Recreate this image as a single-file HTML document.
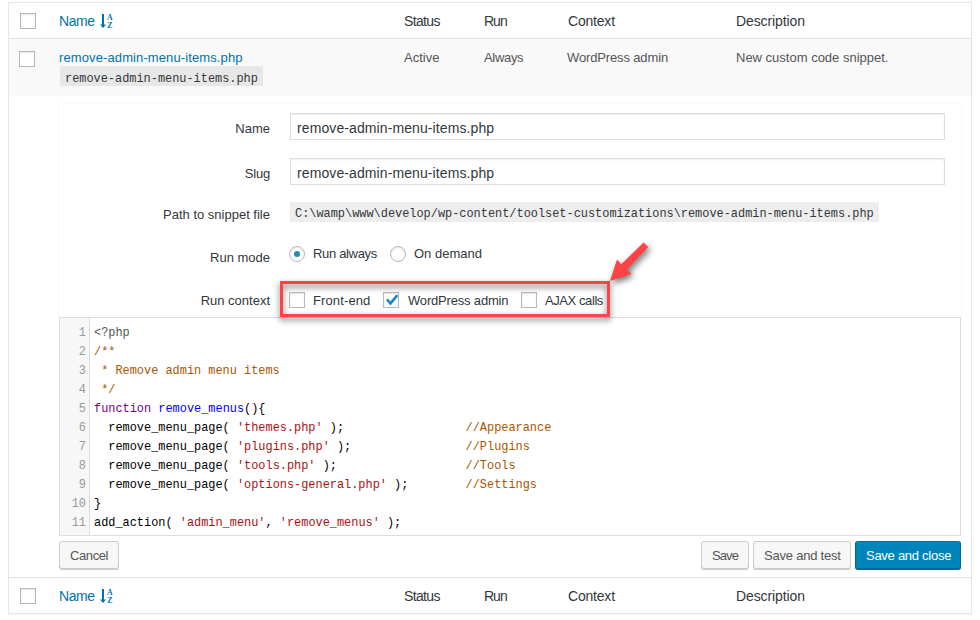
<!DOCTYPE html>
<html><head><meta charset="utf-8">
<style>
*{box-sizing:border-box;margin:0;padding:0}
html,body{width:980px;height:620px;overflow:hidden;background:#fff}
body{position:relative;font-family:"Liberation Sans",sans-serif;font-size:13px;color:#555}
.a{position:absolute;white-space:pre;line-height:16px}
.tbl{position:absolute;left:8px;top:2px;width:964px;height:612px;border:1px solid #e5e5e5;box-shadow:0 1px 1px rgba(0,0,0,.04);background:#fff}
.hl{position:absolute;left:9px;width:962px;height:1px;background:#e1e1e1}
.cb{position:absolute;width:16px;height:16px;border:1px solid #b4b9be;background:#fff;box-shadow:inset 0 1px 2px rgba(0,0,0,.1)}
.th{color:#32373c}
.lnk{color:#0073aa}
.code{position:absolute;font-family:"Liberation Mono",monospace;font-size:11.92px;color:#32373c;background:rgba(0,0,0,.07);white-space:pre}
.lbl{color:#32373c;text-align:right}
.inp{position:absolute;left:290px;width:655px;height:27px;border:1px solid #ddd;box-shadow:inset 0 1px 2px rgba(0,0,0,.07);background:#fff}
.radio{position:absolute;width:16px;height:16px;border:1px solid #b4b9be;border-radius:50%;background:#fff;box-shadow:inset 0 1px 2px rgba(0,0,0,.1)}
.btn{position:absolute;top:541px;height:28px;border:1px solid #ccc;border-radius:3px;background:#f7f7f7;box-shadow:0 1px 0 #ccc;color:#555}
.pri{background:#0085ba;border-color:#0073aa #006799 #006799;box-shadow:0 1px 0 #006799;color:#fff}
.ed{position:absolute;left:59px;top:317px;width:902px;height:219px;border:1px solid #ddd;background:#fff;overflow:hidden}
.gut{position:absolute;left:0;top:0;width:30px;height:100%;background:#f7f7f7;border-right:1px solid #ddd}
.ln{position:absolute;left:0;width:26px;text-align:right;font-family:"Liberation Mono",monospace;font-size:11.92px;color:#999;line-height:19px}
.cl{position:absolute;left:34px;font-family:"Liberation Mono",monospace;font-size:11.92px;color:#000;line-height:19px;white-space:pre}
.k{color:#708}.d{color:#00f}.s{color:#a11}.c{color:#a50}
</style></head><body>
<div class="tbl"></div>
<!-- header -->
<div class="hl" style="top:38px"></div>
<div class="cb" style="left:20px;top:13px"></div>
<div class="a lnk" style="left:59px;top:13px;font-size:14px;letter-spacing:-.45px">Name</div>
<svg class="sort" width="14" height="15" viewBox="0 0 14 15" style="position:absolute;left:100px;top:14px">
<rect x="2" y="0" width="2" height="11" fill="#0073aa"/><path d="M0 10.5 L6 10.5 L3 14 Z" fill="#0073aa"/>
<text x="9.9" y="6" font-family="Liberation Serif" font-weight="bold" font-size="7.8" fill="#0073aa" text-anchor="middle">A</text>
<text x="9.9" y="13.8" font-family="Liberation Serif" font-weight="bold" font-size="7.8" fill="#0073aa" text-anchor="middle">Z</text></svg>
<div class="a th" style="left:404px;top:13px;font-size:14px;letter-spacing:-.65px">Status</div>
<div class="a th" style="left:484px;top:13px;font-size:14px;letter-spacing:-1px">Run</div>
<div class="a th" style="left:568px;top:13px;font-size:14px;letter-spacing:-.2px">Context</div>
<div class="a th" style="left:736px;top:13px;font-size:14px;letter-spacing:-.1px">Description</div>

<!-- row 1 -->
<div style="position:absolute;left:9px;top:39px;width:962px;height:57px;background:#f9f9f9"></div>
<div class="cb" style="left:19px;top:51px"></div>
<div class="a lnk" style="left:59px;top:50px;letter-spacing:.11px">remove-admin-menu-items.php</div>
<div class="code" style="left:60px;top:66px;width:203px;height:20px;padding:6px 5px 0 5px">remove-admin-menu-items.php</div>
<div class="a" style="left:404px;top:50px">Active</div>
<div class="a" style="left:484px;top:50px;letter-spacing:-.32px">Always</div>
<div class="a" style="left:567px;top:50px;letter-spacing:-.14px">WordPress admin</div>
<div class="a" style="left:736px;top:50px">New custom code snippet.</div>

<!-- form -->
<div style="position:absolute;left:58px;top:103px;width:904px;height:216px;border:1px solid #fafafa"></div>
<div class="a lbl" style="left:150px;width:120px;top:121px">Name</div>
<div class="inp" style="top:113px"></div>
<div class="a" style="left:297px;top:120px;font-size:14px;color:#32373c;letter-spacing:.1px">remove-admin-menu-items.php</div>
<div class="a lbl" style="left:150px;width:120px;top:166px;letter-spacing:-.2px">Slug</div>
<div class="inp" style="top:158px"></div>
<div class="a" style="left:297px;top:165px;font-size:14px;color:#32373c;letter-spacing:.1px">remove-admin-menu-items.php</div>
<div class="a lbl" style="left:150px;width:120px;top:207px">Path to snippet file</div>
<div class="code" style="left:290px;top:202px;width:589px;height:20px;padding:5px 5px 0 5px">C:\wamp\www\develop/wp-content/toolset-customizations\remove-admin-menu-items.php</div>
<div class="a lbl" style="left:150px;width:120px;top:250px">Run mode</div>
<div class="radio" style="left:289px;top:246px"><div style="position:absolute;left:4px;top:4px;width:6px;height:6px;border-radius:50%;background:#1e8cbe"></div></div>
<div class="a" style="left:313px;top:246px;color:#32373c;letter-spacing:-.33px">Run always</div>
<div class="radio" style="left:390px;top:246px"></div>
<div class="a" style="left:414px;top:246px;color:#32373c">On demand</div>
<div class="a lbl" style="left:150px;width:120px;top:293px">Run context</div>
<div class="cb" style="left:289px;top:292px"></div>
<div class="a" style="left:313px;top:293px;color:#32373c;letter-spacing:.12px">Front-end</div>
<div class="cb" style="left:383px;top:292px"><svg width="16" height="16" style="position:absolute;left:-1px;top:-1px;overflow:visible"><path d="M4.6 8.2 L7.5 11.4 L13.6 4.1" stroke="#1e8cbe" stroke-width="2.7" fill="none" stroke-linecap="round" stroke-linejoin="miter"/></svg></div>
<div class="a" style="left:408px;top:293px;color:#32373c;letter-spacing:-.18px">WordPress admin</div>
<div class="cb" style="left:521px;top:292px"></div>
<div class="a" style="left:545px;top:293px;color:#32373c;letter-spacing:-.42px">AJAX calls</div>

<!-- editor -->
<div class="ed">
<div class="gut"></div>
<div class="ln" style="top:6px">1</div><div class="cl" style="top:6px"><span style="color:#555">&lt;?php</span></div>
<div class="ln" style="top:25px">2</div><div class="cl" style="top:25px"><span class="c">/**</span></div>
<div class="ln" style="top:44px">3</div><div class="cl" style="top:44px"><span class="c"> * Remove admin menu items</span></div>
<div class="ln" style="top:63px">4</div><div class="cl" style="top:63px"><span class="c"> */</span></div>
<div class="ln" style="top:82px">5</div><div class="cl" style="top:82px"><span class="k">function</span> <span class="d">remove_menus</span>(){</div>
<div class="ln" style="top:101px">6</div><div class="cl" style="top:101px">  remove_menu_page( <span class="s">'themes.php'</span> );                 <span class="c">//Appearance</span></div>
<div class="ln" style="top:120px">7</div><div class="cl" style="top:120px">  remove_menu_page( <span class="s">'plugins.php'</span> );                <span class="c">//Plugins</span></div>
<div class="ln" style="top:139px">8</div><div class="cl" style="top:139px">  remove_menu_page( <span class="s">'tools.php'</span> );                  <span class="c">//Tools</span></div>
<div class="ln" style="top:158px">9</div><div class="cl" style="top:158px">  remove_menu_page( <span class="s">'options-general.php'</span> );        <span class="c">//Settings</span></div>
<div class="ln" style="top:177px">10</div><div class="cl" style="top:177px">}</div>
<div class="ln" style="top:196px">11</div><div class="cl" style="top:196px">add_action( <span class="s">'admin_menu'</span>, <span class="s">'remove_menus'</span> );</div>
</div>

<!-- buttons -->
<div class="btn" style="left:59px;width:60px"></div>
<div class="a" style="left:70px;top:548px;color:#555;letter-spacing:-.4px">Cancel</div>
<div class="btn" style="left:701px;width:48px"></div>
<div class="a" style="left:712px;top:548px;color:#555;letter-spacing:-.9px">Save</div>
<div class="btn" style="left:753px;width:98px"></div>
<div class="a" style="left:764px;top:548px;color:#555;letter-spacing:-.22px">Save and test</div>
<div class="btn pri" style="left:855px;width:106px"></div>
<div class="a" style="left:866px;top:548px;color:#fff;letter-spacing:-.27px">Save and close</div>

<!-- footer header -->
<div class="hl" style="top:577px"></div>
<div class="cb" style="left:20px;top:588px"></div>
<div class="a lnk" style="left:59px;top:588px;font-size:14px;letter-spacing:-.45px">Name</div>
<svg class="sort" width="14" height="15" viewBox="0 0 14 15" style="position:absolute;left:100px;top:589px">
<rect x="2" y="0" width="2" height="11" fill="#0073aa"/><path d="M0 10.5 L6 10.5 L3 14 Z" fill="#0073aa"/>
<text x="9.9" y="6" font-family="Liberation Serif" font-weight="bold" font-size="7.8" fill="#0073aa" text-anchor="middle">A</text>
<text x="9.9" y="13.8" font-family="Liberation Serif" font-weight="bold" font-size="7.8" fill="#0073aa" text-anchor="middle">Z</text></svg>
<div class="a th" style="left:404px;top:588px;font-size:14px;letter-spacing:-.65px">Status</div>
<div class="a th" style="left:484px;top:588px;font-size:14px;letter-spacing:-1px">Run</div>
<div class="a th" style="left:568px;top:588px;font-size:14px;letter-spacing:-.2px">Context</div>
<div class="a th" style="left:736px;top:588px;font-size:14px;letter-spacing:-.1px">Description</div>
<!-- annotation -->
<div style="position:absolute;left:280px;top:281px;width:330px;height:36px;border:3px solid #fc4346;filter:drop-shadow(0 3px 3px rgba(0,0,0,.6))"></div>
<svg width="980" height="620" style="position:absolute;left:0;top:0;filter:drop-shadow(2px 3px 3px rgba(0,0,0,.55))"><path d="M610 281 L617 259.5 L621.3 264.3 L643.6 242.5 L648.3 246.9 L627 269.5 L631.4 274 Z" fill="#fc4346"/></svg>
</body></html>
